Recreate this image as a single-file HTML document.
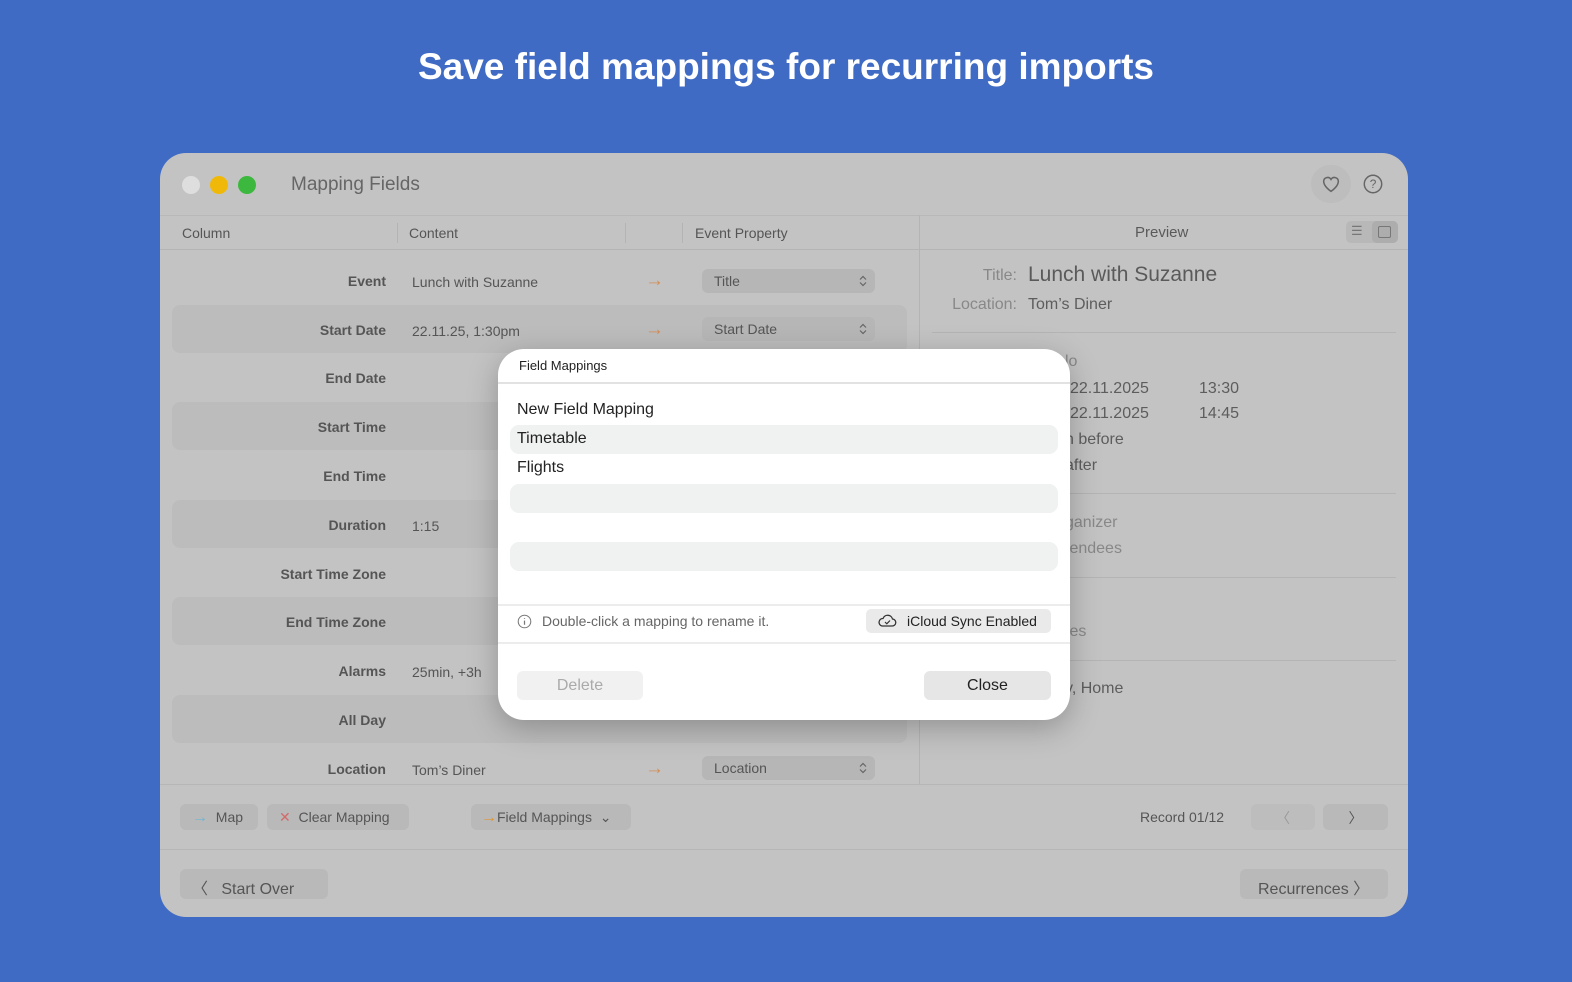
<!DOCTYPE html>
<html><head><meta charset="utf-8"><style>
*{margin:0;padding:0;box-sizing:border-box}
body{width:1572px;height:982px;background:#3f6bc4;font-family:"Liberation Sans",sans-serif;position:relative;overflow:hidden}
.a{position:absolute}
h1{position:absolute;top:46px;left:0;width:1572px;text-align:center;color:#fff;font-size:37px;font-weight:bold}
.win{left:160px;top:153px;width:1248px;height:764px;background:#c3c3c3;border-radius:26px;overflow:hidden}
.t{color:#555;font-size:14px}
.lbl{position:absolute;right:1022px;width:200px;text-align:right;font-weight:bold;font-size:14px;color:#555}
.band{position:absolute;left:12px;width:735px;height:48px;background:#bcbcbc;border-radius:8px}
.sel{position:absolute;left:542px;width:173px;height:24px;background:#b6b6b6;border-radius:6px;font-size:14px;color:#555;padding:4px 12px}
.sel svg{position:absolute;right:8px;top:6px}
.arr{position:absolute;left:485px;color:#d48c55;font-size:19px;line-height:20px}
.btn{position:absolute;background:#b9b9b9;border-radius:6px;color:#555;font-size:14px}
.pv{position:absolute;font-size:16px;color:#5d5d5d}
.pl{position:absolute;font-size:16px;color:#888;width:100px;text-align:right;left:757px}
.hr{position:absolute;left:772px;width:464px;height:1px;background:#b4b4b4}
.dlg{left:498px;top:349px;width:572px;height:371px;background:#fff;border-radius:26px;box-shadow:0 8px 30px rgba(0,0,0,.25);overflow:hidden}
.row{position:absolute;left:12px;width:548px;height:29px;background:#f0f1f1;border-radius:9px}
.it{position:absolute;left:19px;font-size:16px;color:#222}
</style></head><body>
<h1>Save field mappings for recurring imports</h1>
<div class="a win">
 <div class="a" style="left:22px;top:23px;width:18px;height:18px;border-radius:50%;background:#dedede"></div>
 <div class="a" style="left:50px;top:23px;width:18px;height:18px;border-radius:50%;background:#f0b90a"></div>
 <div class="a" style="left:78px;top:23px;width:18px;height:18px;border-radius:50%;background:#3cb83e"></div>
 <div class="a" style="left:131px;top:21px;font-size:19px;color:#666">Mapping Fields</div>
 <div class="a" style="left:1151px;top:12px;width:40px;height:38px;border-radius:19px;background:#bdbdbd"></div>
 <svg class="a" style="left:1160px;top:20px" width="22" height="22" viewBox="0 0 24 24"><path d="M12 20s-8-5-8-11a4.3 4.3 0 0 1 8-2 4.3 4.3 0 0 1 8 2c0 6-8 11-8 11z" fill="none" stroke="#666" stroke-width="1.7"/></svg>
 <svg class="a" style="left:1202px;top:20px" width="22" height="22" viewBox="0 0 24 24"><circle cx="12" cy="12" r="9.5" fill="none" stroke="#666" stroke-width="1.6"/><text x="12" y="16.5" text-anchor="middle" font-size="13" fill="#666" font-family="Liberation Sans">?</text></svg>
 <div class="a" style="left:0;top:62px;width:1248px;height:1px;background:#b8b8b8"></div>
 <div class="a" style="left:0;top:96px;width:1248px;height:1px;background:#b4b4b4"></div>
 <div class="a" style="left:759px;top:62px;width:1px;height:570px;background:#b4b4b4"></div>
 <div class="a t" style="left:22px;top:72px">Column</div>
 <div class="a" style="left:237px;top:70px;width:1px;height:20px;background:#b4b4b4"></div>
 <div class="a t" style="left:249px;top:72px">Content</div>
 <div class="a" style="left:465px;top:70px;width:1px;height:20px;background:#b4b4b4"></div>
 <div class="a" style="left:522px;top:70px;width:1px;height:20px;background:#b4b4b4"></div>
 <div class="a t" style="left:535px;top:72px">Event Property</div>
 <div class="a" style="left:975px;top:71px;font-size:15px;color:#5a5a5a">Preview</div>
 <div class="a" style="left:1186px;top:68px;width:52px;height:22px;background:#b8b8b8;border-radius:5px"></div>
 <div class="a" style="left:1212px;top:68px;width:26px;height:22px;background:#adadad;border-radius:5px"></div>
 <div class="a" style="left:1191px;top:70px;font-size:13px;color:#777">☰</div>
 <div class="a" style="left:1218px;top:73px;width:13px;height:12px;border:1px solid #777;border-radius:2px"></div>

 <div class="band" style="top:152px"></div><div class="band" style="top:249px"></div><div class="band" style="top:347px"></div><div class="band" style="top:444px"></div><div class="band" style="top:542px"></div>
 <div class="lbl" style="top:120px">Event</div><div class="a t" style="left:252px;top:121px">Lunch with Suzanne</div><div class="arr" style="top:118px">→</div><div class="sel" style="top:116px">Title<svg width="8" height="12" viewBox="0 0 8 12"><path d="M1 4.5L4 1.5 7 4.5M1 7.5L4 10.5 7 7.5" fill="none" stroke="#666" stroke-width="1.2"/></svg></div>
 <div class="lbl" style="top:169px">Start Date</div><div class="a t" style="left:252px;top:170px">22.11.25, 1:30pm</div><div class="arr" style="top:167px">→</div><div class="sel" style="top:164px">Start Date<svg width="8" height="12" viewBox="0 0 8 12"><path d="M1 4.5L4 1.5 7 4.5M1 7.5L4 10.5 7 7.5" fill="none" stroke="#666" stroke-width="1.2"/></svg></div>
 <div class="lbl" style="top:217px">End Date</div>
 <div class="lbl" style="top:266px">Start Time</div>
 <div class="lbl" style="top:315px">End Time</div>
 <div class="lbl" style="top:364px">Duration</div><div class="a t" style="left:252px;top:365px">1:15</div>
 <div class="lbl" style="top:413px">Start Time Zone</div>
 <div class="lbl" style="top:461px">End Time Zone</div>
 <div class="lbl" style="top:510px">Alarms</div><div class="a t" style="left:252px;top:511px">25min, +3h</div>
 <div class="lbl" style="top:559px">All Day</div>
 <div class="lbl" style="top:608px">Location</div><div class="a t" style="left:252px;top:609px">Tom’s Diner</div><div class="arr" style="top:606px">→</div><div class="sel" style="top:603px">Location<svg width="8" height="12" viewBox="0 0 8 12"><path d="M1 4.5L4 1.5 7 4.5M1 7.5L4 10.5 7 7.5" fill="none" stroke="#666" stroke-width="1.2"/></svg></div>

 <div class="pl" style="top:114px">Title:</div><div class="a" style="left:868px;top:110px;font-size:21px;color:#5a5a5a">Lunch with Suzanne</div>
 <div class="pl" style="top:143px">Location:</div><div class="pv" style="left:868px;top:143px">Tom’s Diner</div>
 <div class="hr" style="top:179px"></div>
 <div class="pv" style="left:905px;top:200px;color:#888">lo</div>
 <div class="pv" style="left:910px;top:227px">22.11.2025</div><div class="pv" style="left:1039px;top:227px">13:30</div>
 <div class="pv" style="left:910px;top:252px">22.11.2025</div><div class="pv" style="left:1039px;top:252px">14:45</div>
 <div class="pv" style="left:905px;top:278px">n before</div><div class="pv" style="left:905px;top:304px">after</div>
 <div class="hr" style="top:340px"></div>
 <div class="pv" style="left:905px;top:361px;color:#888">ganizer</div><div class="pv" style="left:905px;top:387px;color:#888">tendees</div>
 <div class="hr" style="top:424px"></div>
 <div class="pv" style="left:905px;top:470px;color:#888">tes</div>
 <div class="hr" style="top:507px"></div>
 <div class="pv" style="left:905px;top:527px">y, Home</div>

 <div class="a" style="left:0;top:631px;width:1248px;height:1px;background:#b6b6b6"></div>
 <div class="btn" style="left:20px;top:651px;width:78px;height:26px;padding:5px 0 0 12px"><span style="color:#6fb5d3;font-size:16px">→</span>&nbsp; Map</div>
 <div class="btn" style="left:107px;top:651px;width:142px;height:26px;padding:5px 0 0 12px"><span style="color:#d46a6a">✕</span>&nbsp; Clear Mapping</div>
 <div class="btn" style="left:311px;top:651px;width:160px;height:26px;padding:5px 0 0 10px"><span style="color:#e0962e;font-size:16px">→</span>Field Mappings &nbsp;⌄</div>
 <div class="a t" style="left:980px;top:656px">Record 01/12</div>
 <div class="btn" style="left:1091px;top:651px;width:64px;height:26px;background:#bdbdbd;text-align:center;padding-top:4px;color:#999">〈</div>
 <div class="btn" style="left:1163px;top:651px;width:65px;height:26px;text-align:center;padding-top:4px">〉</div>
 <div class="a" style="left:0;top:696px;width:1248px;height:1px;background:#b6b6b6"></div>
 <div class="btn" style="left:20px;top:716px;width:148px;height:30px;font-size:16px;padding:6px 0 0 12px">〈 &nbsp; Start Over</div>
 <div class="btn" style="left:1080px;top:716px;width:148px;height:30px;font-size:16px;padding:6px 0 0 18px">Recurrences 〉</div>
</div>

<div class="a dlg">
 <div class="a" style="left:21px;top:9px;font-size:13px;color:#222">Field Mappings</div>
 <div class="a" style="left:0;top:33px;width:572px;height:2px;background:#e2e2e2"></div>
 <div class="it" style="top:52px">New Field Mapping</div>
 <div class="row" style="top:76px"></div><div class="it" style="top:81px">Timetable</div>
 <div class="it" style="top:110px">Flights</div>
 <div class="row" style="top:135px"></div>
 <div class="row" style="top:193px"></div>
 <div class="a" style="left:0;top:255px;width:572px;height:2px;background:#ececec"></div>
 <svg class="a" style="left:19px;top:265px" width="15" height="15" viewBox="0 0 16 16"><circle cx="8" cy="8" r="6.7" fill="none" stroke="#777" stroke-width="1.1"/><path d="M8 7v4.5M8 4.5v.8" stroke="#777" stroke-width="1.3"/></svg>
 <div class="a" style="left:44px;top:264px;font-size:14px;color:#666">Double-click a mapping to rename it.</div>
 <div class="a" style="left:368px;top:260px;width:185px;height:24px;background:#eaeaea;border-radius:5px"></div>
 <svg class="a" style="left:379px;top:264px" width="20" height="16" viewBox="0 0 20 16"><path d="M5 13h10a3.5 3.5 0 0 0 .5-7A5 5 0 0 0 6 5.5 3.8 3.8 0 0 0 5 13z" fill="none" stroke="#333" stroke-width="1.3"/><path d="M8 9l1.8 1.8L13 7.5" fill="none" stroke="#333" stroke-width="1.2"/></svg>
 <div class="a" style="left:409px;top:264px;font-size:14px;color:#222">iCloud Sync Enabled</div>
 <div class="a" style="left:0;top:293px;width:572px;height:2px;background:#ececec"></div>
 <div class="a" style="left:19px;top:322px;width:126px;height:29px;background:#f1f1f1;border-radius:6px;text-align:center;font-size:16px;color:#aaa;padding-top:6px">Delete</div>
 <div class="a" style="left:426px;top:322px;width:127px;height:29px;background:#e6e6e6;border-radius:6px;text-align:center;font-size:16px;color:#222;padding-top:6px">Close</div>
</div>
</body></html>
